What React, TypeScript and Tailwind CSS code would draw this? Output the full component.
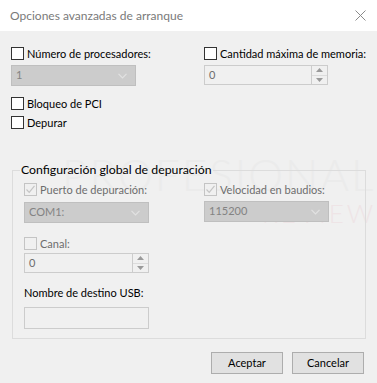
import React from "react";

const Check = ({ checked = false, disabled = false }: { checked?: boolean; disabled?: boolean }) => (
  <div
    className={`w-[13px] h-[13px] border flex items-center justify-center shrink-0 ${
      disabled ? "border-[#c4c4c4] bg-[#f0f0f0]" : "border-[#333333] bg-white"
    }`}
  >
    {checked && (
      <svg width="11" height="11" viewBox="0 0 11 11">
        <path d="M1.5 5.5 L4.2 8.3 L9.5 1.8" fill="none" stroke="#c4c4c4" strokeWidth="1.2" />
      </svg>
    )}
  </div>
);

const CheckRow = ({
  label,
  checked,
  disabled,
}: {
  label: string;
  checked?: boolean;
  disabled?: boolean;
}) => (
  <div className="flex items-center gap-[3px] h-[13px] whitespace-nowrap">
    <Check checked={checked} disabled={disabled} />
    <span className={`leading-[13px] ${disabled ? "text-[#6d6d6d]" : "text-black"}`}>{label}</span>
  </div>
);

const Select = ({ value, w }: { value: string; w: string }) => (
  <div
    className={`${w} h-[21px] bg-[#cccccc] border border-[#bfbfbf] flex items-center justify-between pl-[4px] pr-[8px] text-[#838383]`}
  >
    <span>{value}</span>
    <svg width="9" height="6" viewBox="0 0 9 6">
      <path d="M0.5 0.8 L4.5 4.8 L8.5 0.8" fill="none" stroke="#e2e2e2" strokeWidth="1.2" />
    </svg>
  </div>
);

const Spin = ({ value, w }: { value: string; w: string }) => (
  <div className={`${w} h-[20px] bg-[#f0f0f0] border border-[#cccccc] flex items-stretch text-[#6d6d6d]`}>
    <div className="flex-1 flex items-center pl-[4px]">{value}</div>
    <div className="w-[16px] border-l border-[#cccccc] flex flex-col">
      <div className="flex-1 flex items-center justify-center border-b border-[#dcdcdc]">
        <svg width="7" height="4" viewBox="0 0 7 4">
          <path d="M0 4 L3.5 0 L7 4 Z" fill="#9a9a9a" />
        </svg>
      </div>
      <div className="flex-1 flex items-center justify-center">
        <svg width="7" height="4" viewBox="0 0 7 4">
          <path d="M0 0 L3.5 4 L7 0 Z" fill="#9a9a9a" />
        </svg>
      </div>
    </div>
  </div>
);

const Button = ({ label }: { label: string }) => (
  <div className="w-[72px] h-[22px] bg-[#e1e1e1] border border-[#adadad] flex items-center justify-center text-black">
    {label}
  </div>
);

export default function App() {
  return (
    <div
      className="relative w-[377px] h-[383px] bg-[#f0f0f0] text-[11px] overflow-hidden"
      style={{ fontFamily: 'Lato, "Noto Sans", sans-serif' }}
    >
      {/* title bar */}
      <div className="h-[31px] bg-white flex items-center justify-between pl-[10px] pr-[11px]">
        <span className="text-[12px] text-[#7a7a7a]">Opciones avanzadas de arranque</span>
        <svg width="11" height="11" viewBox="0 0 11 11">
          <path d="M0.5 0.5 L10.5 10.5 M10.5 0.5 L0.5 10.5" stroke="#8a8a8a" strokeWidth="1" />
        </svg>
      </div>

      {/* watermark */}
      <div className="absolute left-[62px] top-[152px] text-[44px] leading-[44px] font-light tracking-[2px] text-[#ebebeb] pointer-events-none select-none">
        PROFESIONAL
      </div>
      <div className="absolute left-[262px] top-[200px] text-[26px] leading-[26px] font-light tracking-[3px] text-[#eee4e6] pointer-events-none select-none">
        REVIEW
      </div>

      <div className="relative px-[11px] pt-[16px]">
        {/* top rows */}
        <div className="flex">
          <div className="w-[193px] shrink-0 flex flex-col">
            <CheckRow label="Número de procesadores:" />
            <div className="mt-[5px]">
              <Select value="1" w="w-[125px]" />
            </div>
          </div>
          <div className="flex flex-col">
            <CheckRow label="Cantidad máxima de memoria:" />
            <div className="mt-[5px]">
              <Spin value="0" w="w-[124px]" />
            </div>
          </div>
        </div>

        <div className="mt-[11px] flex flex-col gap-[6px]">
          <CheckRow label="Bloqueo de PCI" />
          <CheckRow label="Depurar" />
        </div>

        {/* group box */}
        <fieldset className="mt-[34px] ml-[1px] w-[354px] h-[176px] border border-[#dcdcdc] px-[11px] pt-[6px] pb-0">
          <legend className="px-[1px] ml-[-4px] text-black text-[12.3px] leading-[14px]">
            Configuración global de depuración
          </legend>
          <div className="flex">
            <div className="w-[180px] shrink-0 flex flex-col">
              <CheckRow label="Puerto de depuración:" checked disabled />
              <div className="mt-[6px]">
                <Select value="COM1:" w="w-[125px]" />
              </div>
            </div>
            <div className="flex flex-col">
              <CheckRow label="Velocidad en baudios:" checked disabled />
              <div className="mt-[5px]">
                <Select value="115200" w="w-[125px]" />
              </div>
            </div>
          </div>
          <div className="mt-[14px]">
            <CheckRow label="Canal:" disabled />
          </div>
          <div className="mt-[3px]">
            <Spin value="0" w="w-[125px]" />
          </div>
          <div className="mt-[13px] leading-[14px] text-black">Nombre de destino USB:</div>
          <div className="mt-[7px] w-[125px] h-[22px] bg-[#f0f0f0] border border-[#cccccc]" />
        </fieldset>

        <div className="mt-[13px] flex justify-end gap-[9px] pr-[2px]">
          <Button label="Aceptar" />
          <Button label="Cancelar" />
        </div>
      </div>
    </div>
  );
}
